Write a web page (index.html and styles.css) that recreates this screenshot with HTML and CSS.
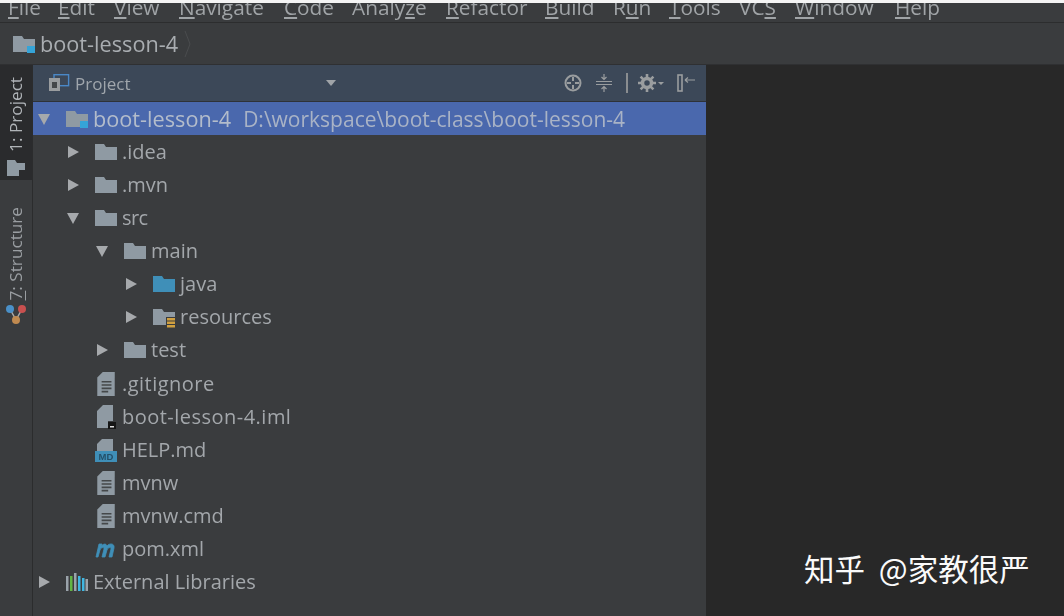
FILE: index.html
```html
<!DOCTYPE html>
<html lang="en">
<head>
<meta charset="utf-8">
<title>boot-lesson-4</title>
<link rel="stylesheet" href="styles.css">
</head>
<body>
<svg class="defs" width="0" height="0">
  <symbol id="folder" viewBox="0 0 22 18"><path d="M0 1h9l2 3h11v13H0z" fill="#8f9aa3"/></symbol>
  <symbol id="folder-blue" viewBox="0 0 22 18"><path d="M0 1h9l2 3h11v13H0z" fill="#3f8fb8"/></symbol>
  <symbol id="folder-mod" viewBox="0 0 22 18"><path d="M0 1h9l2 3h11v9h-8v4H0z" fill="#8f9aa3"/><rect x="14" y="11" width="8" height="7" fill="#35a4d8"/></symbol>
  <symbol id="folder-res" viewBox="0 0 22 22"><path d="M0 1h9l2 3h11v5h-9v8H0z" fill="#8f9aa3"/><rect x="13" y="9" width="9" height="13" fill="#3a3c3e"/><path d="M14 10h8v2.500h-8zM14 13.500h8v2.500h-8zM14 17h8v2.500h-8z" fill="#d0a040"/></symbol>
  <symbol id="file" viewBox="0 0 18 22"><path d="M6 0h11v22H1V5z" fill="#8f9aa3"/><path d="M5 9h9M5 12h9M5 15h9M5 18h6" stroke="#45484a" stroke-width="1.400"/></symbol>
  <symbol id="iml" viewBox="0 0 20 24"><path d="M7 0h10v16h-5v7H1V6z" fill="#8f9aa3"/><rect x="12" y="17" width="8" height="7" fill="#151515"/><rect x="14" y="21" width="4" height="1.500" fill="#ddd"/></symbol>
  <symbol id="md" viewBox="0 0 22 24"><path d="M7 1h11v12H2V6z" fill="#8f9aa3"/><rect y="13" width="22" height="11" fill="#3f8fb8"/><text x="11" y="22" text-anchor="middle" font-family="Liberation Sans, sans-serif" font-size="9.500" font-weight="700" fill="#24506a">MD</text></symbol>
  <symbol id="maven" viewBox="0 0 22 18"><path d="M1 17 4 4h3l-.5 2C8 4 11 3 12 6c2-3 8-3 7 2l-2 9h-3l2-8c.3-2-3-2-4 1l-2 7H7l2-8c.3-2-3-2-4 1l-2 7z" fill="#3f8fb8" stroke="#3f8fb8" stroke-width=".8"/></symbol>
  <symbol id="libs" viewBox="0 0 22 18"><path d="M0 3h2.500v15H0z" fill="#9aa3aa"/><path d="M4 3h2.500v15H4z" fill="#62b543"/><path d="M8 0h2.500v18H8z" fill="#9aa3aa"/><path d="M12 3h2.500v15H12z" fill="#40b6e0"/><path d="M16 5h2.500v13H16z" fill="#40b6e0"/><path d="M19.500 6H22v12h-2.500z" fill="#9aa3aa"/></symbol>
</svg>

<div class="top-edge"></div>
<nav class="menubar">
  <span class="menu m-file"><u>F</u>ile</span>
  <span class="menu m-edit"><u>E</u>dit</span>
  <span class="menu m-view"><u>V</u>iew</span>
  <span class="menu m-nav"><u>N</u>avigate</span>
  <span class="menu m-code"><u>C</u>ode</span>
  <span class="menu m-analyze">Analy<u>z</u>e</span>
  <span class="menu m-refactor"><u>R</u>efactor</span>
  <span class="menu m-build"><u>B</u>uild</span>
  <span class="menu m-run">R<u>u</u>n</span>
  <span class="menu m-tools"><u>T</u>ools</span>
  <span class="menu m-vcs">VC<u>S</u></span>
  <span class="menu m-window"><u>W</u>indow</span>
  <span class="menu m-help"><u>H</u>elp</span>
</nav>
<div class="crumbbar">
  <svg class="ico-crumb"><use href="#folder-mod"/></svg>
  <span class="crumb-text">boot-lesson-4</span>
  <svg class="crumb-sep" viewBox="0 0 8 28"><path d="M1 1l5 13-5 13" fill="none" stroke="#4a4c4e" stroke-width="1"/></svg>
</div>
<main class="workspace">
  <aside class="toolstrip">
    <div class="tab tab-active">
      <span class="tab-label">1: Project</span>
      <svg class="tab-ico" viewBox="0 0 18 18"><path d="M0 1h8l2 3h8v7h-6v6H0z" fill="#8f9aa3"/></svg>
    </div>
    <div class="tab tab-structure">
      <span class="tab-label"><u>7</u>: Structure</span>
      <svg class="tab-ico" viewBox="0 0 20 20"><path d="M4 5 10 16 16 5" fill="none" stroke="#aaa" stroke-width="1.500"/><circle cx="4" cy="5" r="4" fill="#4a90c8"/><circle cx="16" cy="5" r="4" fill="#c8504f"/><circle cx="10" cy="16" r="4" fill="#c08a50"/></svg>
    </div>
  </aside>
  <section class="panel">
    <header class="panel-head">
      <svg class="head-ico" viewBox="0 0 22 18"><rect x="6" y="0.700" width="14.600" height="11" fill="none" stroke="#4a88c7" stroke-width="1.400"/><path d="M1 4h11v13H1z" fill="#9a9d9f"/><rect x="4" y="8" width="5" height="6" fill="#45484a"/></svg>
      <span class="head-title">Project</span>
      <span class="head-caret"></span>
      <svg class="tool t-target" viewBox="0 0 18 18"><circle cx="9" cy="9" r="7.500" fill="none" stroke="#9a9d9f" stroke-width="2"/><path d="M9 3v4M9 11v4M3 9h4M11 9h4" stroke="#9a9d9f" stroke-width="2"/></svg>
      <svg class="tool t-collapse" viewBox="0 0 18 18"><path d="M1 7.500h16M1 10.500h16M9 0v5M6.500 3 9 5.500 11.500 3M9 18v-5M6.500 15 9 12.500 11.500 15" fill="none" stroke="#9a9d9f" stroke-width="1.200"/></svg>
      <span class="tool-sep"></span>
      <svg class="tool t-gear" viewBox="0 0 18 18"><circle cx="9" cy="9" r="4.500" fill="none" stroke="#9a9d9f" stroke-width="3.500"/><path d="M9 0v4M9 14v4M0 9h4M14 9h4M2.600 2.600l3 3M12.400 12.400l3 3M15.400 2.600l-3 3M5.600 12.400l-3 3" stroke="#9a9d9f" stroke-width="2.600"/></svg>
      <span class="gear-caret"></span>
      <svg class="tool t-hide" viewBox="0 0 18 18"><rect x="1" y="1" width="4" height="16" fill="none" stroke="#9a9d9f" stroke-width="1.600"/><path d="M8 6h10M8 6l3-2.500M8 6l3 2.500" fill="none" stroke="#9a9d9f" stroke-width="1.200"/></svg>
    </header>
    <ul class="tree">
      <li class="row selected d0"><span class="arrow open"></span><svg class="ico"><use href="#folder-mod"/></svg><span class="name strong">boot-lesson-4</span><span class="path">D:\workspace\boot-class\boot-lesson-4</span></li>
      <li class="row d1"><span class="arrow"></span><svg class="ico"><use href="#folder"/></svg><span class="name">.idea</span></li>
      <li class="row d1"><span class="arrow"></span><svg class="ico"><use href="#folder"/></svg><span class="name">.mvn</span></li>
      <li class="row d1"><span class="arrow open"></span><svg class="ico"><use href="#folder"/></svg><span class="name narrow">src</span></li>
      <li class="row d2"><span class="arrow open"></span><svg class="ico"><use href="#folder"/></svg><span class="name">main</span></li>
      <li class="row d3"><span class="arrow"></span><svg class="ico"><use href="#folder-blue"/></svg><span class="name">java</span></li>
      <li class="row d3"><span class="arrow"></span><svg class="ico ico-res"><use href="#folder-res"/></svg><span class="name">resources</span></li>
      <li class="row d2"><span class="arrow"></span><svg class="ico"><use href="#folder"/></svg><span class="name">test</span></li>
      <li class="row d1"><span class="arrow none"></span><svg class="ico tall"><use href="#file"/></svg><span class="name wide">.gitignore</span></li>
      <li class="row d1"><span class="arrow none"></span><svg class="ico tall"><use href="#iml"/></svg><span class="name wide">boot-lesson-4.iml</span></li>
      <li class="row d1"><span class="arrow none"></span><svg class="ico tall"><use href="#md"/></svg><span class="name">HELP.md</span></li>
      <li class="row d1"><span class="arrow none"></span><svg class="ico tall"><use href="#file"/></svg><span class="name">mvnw</span></li>
      <li class="row d1"><span class="arrow none"></span><svg class="ico tall"><use href="#file"/></svg><span class="name">mvnw.cmd</span></li>
      <li class="row d1"><span class="arrow none"></span><svg class="ico"><use href="#maven"/></svg><span class="name">pom.xml</span></li>
      <li class="row d0"><span class="arrow"></span><svg class="ico"><use href="#libs"/></svg><span class="name">External Libraries</span></li>
    </ul>
  </section>
  <div class="editor"></div>
</main>
<div class="watermark">知乎 @家教很严</div>
</body>
</html>
```
FILE: styles.css
```css
* { box-sizing: border-box; }
html, body { margin: 0; padding: 0; }
body {
  width: 1064px;
  height: 616px;
  overflow: hidden;
  position: relative;
  display: flex;
  flex-direction: column;
  background: #3a3c3e;
  font-family: "Open Sans", "Noto Sans", sans-serif;
  color: #a4a9ad;
}
.defs { position: absolute; }
.top-edge { height: 3px; background: #f4f4f4; flex: none; }

.menubar, .crumbbar, .toolstrip, .panel { filter: blur(0.45px); }

.menubar {
  height: 20px;
  flex: none;
  overflow: hidden;
  display: flex;
  background: #3a3c3e;
  border-bottom: 1px solid #2c2d2e;
  font-size: 20.800px;
  line-height: 20px;
  color: #a0a4a7;
}
.menu { margin-top: -6px; flex: none; }
.m-file { margin-left: 8px; width: 50px; }
.m-edit { width: 56px; }
.m-view { width: 65px; }
.m-nav { width: 105px; }
.m-code { width: 68px; }
.m-analyze { width: 94px; }
.m-refactor { width: 99px; }
.m-build { width: 68px; }
.m-run { width: 56px; }
.m-tools { width: 70px; }
.m-vcs { width: 56px; }
.m-window { width: 100px; }
.m-help { width: 50px; }

.crumbbar {
  height: 42px;
  flex: none;
  display: flex;
  align-items: center;
  padding-left: 13px;
  background: #3a3c3e;
  border-bottom: 1px solid #2f3032;
}
.ico-crumb { width: 22px; height: 18px; margin-right: 5px; }
.crumb-text { font-size: 21.700px; color: #a9adb1; }
.crumb-sep { width: 8px; height: 28px; margin-left: 6px; }

.workspace { flex: 1; display: flex; min-height: 0; }

.toolstrip {
  width: 33px;
  flex: none;
  background: #3a3c3e;
  border-right: 1px solid #2b2c2d;
  display: flex;
  flex-direction: column;
}
.tab {
  display: flex;
  flex-direction: column;
  align-items: center;
  width: 32px;
  font-size: 17.200px;
}
.tab-active { background: #2a2b2d; height: 115px; padding-top: 12px; gap: 7px; color: #b0b4b8; }
.tab-structure { padding-top: 27px; gap: 3px; color: #9a9ea2; }
.tab-label {
  writing-mode: vertical-rl;
  transform: rotate(180deg);
  line-height: 20px;
}
.tab-active .tab-ico { width: 18px; height: 18px; }
.tab-structure .tab-ico { width: 20px; height: 20px; }

.panel { width: 673px; flex: none; display: flex; flex-direction: column; background: #3a3c3e; }
.panel-head {
  height: 37px;
  flex: none;
  display: flex;
  align-items: center;
  padding-left: 15px;
  background: #3c4858;
  border-bottom: 1px solid #2e3238;
}
.head-ico { width: 22px; height: 18px; margin-right: 5px; }
.head-title { font-size: 17px; color: #a0a6ac; width: 252px; }
.head-caret {
  width: 0; height: 0;
  border-left: 5px solid transparent;
  border-right: 5px solid transparent;
  border-top: 6px solid #a0a4a8;
  margin-left: -1px;
}
.tool { width: 18px; height: 18px; flex: none; }
.t-target { margin-left: 228px; }
.t-collapse { margin-left: 13px; }
.tool-sep { width: 2px; height: 20px; background: #8a8d90; margin-left: 13px; }
.t-gear { margin-left: 10px; }
.gear-caret {
  width: 0; height: 0;
  border-left: 3px solid transparent;
  border-right: 3px solid transparent;
  border-top: 3px solid #9a9d9f;
  margin-left: 2px;
}
.t-hide { margin-left: 13px; }

.tree { list-style: none; margin: 0; padding: 0; flex: 1; }
.row {
  height: 33.140px;
  display: flex;
  align-items: center;
  font-size: 20px;
  color: #a3a7ab;
}
.d0 { padding-left: 5px; }
.d1 { padding-left: 34px; }
.d2 { padding-left: 63px; }
.d3 { padding-left: 92px; }
.selected { background: #4a68ad; color: #b3bccb; }
.arrow {
  width: 28px;
  height: 14px;
  flex: none;
  position: relative;
}
.arrow::before {
  content: "";
  position: absolute;
  left: 1px;
  top: 1px;
  border-top: 6px solid transparent;
  border-bottom: 6px solid transparent;
  border-left: 11px solid #a6a9ac;
}
.arrow.open::before {
  left: 0;
  top: 2px;
  border-left: 6.500px solid transparent;
  border-right: 6.500px solid transparent;
  border-top: 11px solid #a6a9ac;
  border-bottom: 0;
}
.arrow.none::before { display: none; }
.ico { width: 22px; height: 18px; flex: none; margin-right: 5px; }
.ico.tall { height: 24px; }
.ico.ico-res { height: 22px; margin-top: 4px; }
.name { line-height: 1; }
.name.strong { font-size: 21.700px; }
.name.wide { letter-spacing: 0.480px; }
.name.narrow { letter-spacing: -0.600px; }
.path { margin-left: 12px; font-size: 21px; color: #a9b3c6; }

.editor { flex: 1; background: #282828; }

.watermark {
  position: absolute;
  left: 804px;
  top: 548px;
  font-family: "Noto Sans CJK SC", "Noto Sans", sans-serif;
  font-size: 30.500px;
  line-height: 40px;
  word-spacing: 7px;
  color: #fafafa;
  white-space: nowrap;
}
```
